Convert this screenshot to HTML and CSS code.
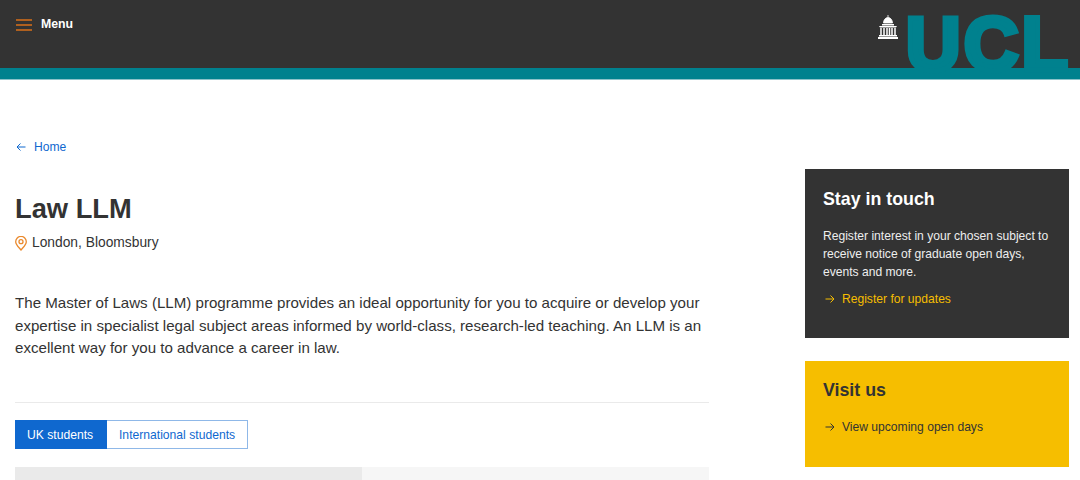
FILE: index.html
```html
<!DOCTYPE html>
<html lang="en">
<head>
    <meta charset="UTF-8">
    <title>Law LLM</title>
    <link rel="stylesheet" href="styles.css">
</head>
<body>
    <!-- Site header -->
    <header class="site-header">
        <a class="menu-link" href="#">
            <svg class="menu-icon" width="16" height="12" viewBox="0 0 16 12">
                <path d="M0 1h16M0 6h16M0 11h16" stroke="#d9701a" stroke-width="1.4" fill="none"/>
            </svg>
            Menu
        </a>
        <div class="logo">
            <svg class="portico" width="20" height="24" viewBox="0 0 20 24">
                <path d="M10 0v2M5.500 8C5.500 5 7.500 2.500 10 2.500S14.500 5 14.500 8z" stroke="#fff" stroke-width="0.8" fill="#fff"/>
                <path d="M4 9h12v1.500H4zM1 11h18l-1 1.500H2zM1 20h18v1.400H1zM0 22h20v2H0z" fill="#fff"/>
                <path d="M3 13v7M6 13v7M9 13v7M11.500 13v7M14 13v7M17 13v7" stroke="#fff" stroke-width="1.500"/>
            </svg>
            <span class="logo-text">UCL</span>
        </div>
    </header>
    <div class="teal-bar"></div>

    <div class="page">
        <main class="content">
            <a class="back-link" href="#">
                <svg width="10" height="10" viewBox="0 0 10 10">
                    <path d="M9.500 5H1M4.500 1.500L1 5l3.500 3.500" stroke="#0f68cf" stroke-width="1" fill="none"/>
                </svg>
                Home
            </a>
            <h1>Law LLM</h1>
            <div class="location">
                <svg width="12" height="15" viewBox="0 0 12 15">
                    <path d="M6 14C3 10.500 .7 8.500 .7 5.700A5.300 5.300 0 0 1 11.300 5.700C11.300 8.500 9 10.500 6 14z" stroke="#ea8a2e" stroke-width="1.300" fill="none"/>
                    <circle cx="6" cy="5.700" r="2" stroke="#ea8a2e" stroke-width="1.300" fill="none"/>
                </svg>
                London, Bloomsbury
            </div>
            <p class="intro">The Master of Laws (LLM) programme provides an ideal opportunity for you to acquire or develop your expertise in specialist legal subject areas informed by world-class, research-led teaching. An LLM is an excellent way for you to advance a career in law.</p>
            <div class="tabs">
                <a class="tab active" href="#">UK students</a>
                <a class="tab" href="#">International students</a>
            </div>
            <div class="fee-table">
                <div class="fee-head"></div>
                <div class="fee-cell"></div>
            </div>
        </main>

        <aside class="sidebar">
            <div class="card card-dark">
                <h2>Stay in touch</h2>
                <p>Register interest in your chosen subject to receive notice of graduate open days, events and more.</p>
                <a class="card-link" href="#">
                    <svg width="10" height="10" viewBox="0 0 10 10">
                        <path d="M.5 5H9M5.500 1.500L9 5 5.500 8.500" stroke="currentColor" stroke-width="1" fill="none"/>
                    </svg>
                    Register for updates
                </a>
            </div>
            <div class="card card-yellow">
                <h2>Visit us</h2>
                <a class="card-link" href="#">
                    <svg width="10" height="10" viewBox="0 0 10 10">
                        <path d="M.5 5H9M5.500 1.500L9 5 5.500 8.500" stroke="currentColor" stroke-width="1" fill="none"/>
                    </svg>
                    View upcoming open days
                </a>
            </div>
        </aside>
    </div>
</body>
</html>
```

FILE: styles.css
```css
/* Reset and base styles */
* {
    box-sizing: border-box;
}

html,
body {
    height: 480px;
    overflow: hidden;
}

body {
    margin: 0;
    font-family: "Liberation Sans", Arial, sans-serif;
    color: #333;
    background: #fff;
}

a {
    text-decoration: none;
}

/* Header */
.site-header {
    display: flex;
    justify-content: space-between;
    height: 68px;
    padding-left: 16px;
    background: #333;
}

.menu-link {
    display: flex;
    align-items: flex-start;
    gap: 9px;
    height: 14px;
    margin-top: 18px;
    font-size: 12.300px;
    line-height: 12px;
    font-weight: bold;
    color: #fff;
}

.menu-icon {
    margin-top: 1px;
}

.logo {
    display: flex;
    align-items: flex-start;
    padding-right: 9px;
}

.portico {
    margin: 15px 8px 0 0;
}

.logo-text {
    height: 64px;
    margin-top: 12px;
    font-size: 76px;
    line-height: 64px;
    font-weight: bold;
    letter-spacing: 3px;
    color: #00818e;
    -webkit-text-stroke: 5px #00818e;
}

.teal-bar {
    height: 12px;
    background: #00818e;
    border-bottom: 1px solid #8cc2c9;
}

/* Page layout */
.page {
    display: flex;
    justify-content: space-between;
    padding: 0 11px 0 15px;
}

.content {
    width: 694px;
    padding-top: 59px;
}

.back-link {
    display: flex;
    align-items: center;
    gap: 8px;
    height: 15px;
    padding-left: 1px;
    font-size: 12.100px;
    color: #0f68cf;
}

h1 {
    margin: 38px 0 0;
    font-size: 27.300px;
    line-height: 34px;
    font-weight: bold;
}

.location {
    display: flex;
    align-items: center;
    gap: 5px;
    margin-top: 8px;
    font-size: 13.800px;
    line-height: 18px;
}

.intro {
    margin: 40px 0 0;
    padding-bottom: 42px;
    font-size: 15.120px;
    line-height: 22.600px;
    border-bottom: 1px solid #eaeaea;
}

/* Fee tabs */
.tabs {
    display: flex;
    margin-top: 17px;
}

.tab {
    height: 29px;
    padding: 0 12px;
    font-size: 12.150px;
    line-height: 28px;
    color: #0f68cf;
    border: 1px solid #8fb8e8;
    border-left: 0;
}

.tab.active {
    width: 92px;
    color: #fff;
    background: #0f68cf;
    border-color: #0f68cf;
}

.fee-table {
    display: flex;
    height: 13px;
    margin-top: 18px;
}

.fee-head {
    width: 347px;
    background: #eaeaea;
}

.fee-cell {
    flex: 1;
    background: #f6f6f6;
}

/* Sidebar cards */
.sidebar {
    display: flex;
    flex-direction: column;
    gap: 23px;
    width: 264px;
    padding-top: 89px;
}

.card {
    padding: 18px;
    font-size: 12.100px;
    line-height: 18px;
}

.card h2 {
    margin: 0;
    font-size: 17.800px;
    line-height: 24px;
}

.card p {
    margin: 16px 0 0;
    color: #eee;
}

.card-dark {
    height: 169px;
    color: #fff;
    background: #333;
}

.card-yellow {
    height: 106px;
    padding-top: 17px;
    color: #333;
    background: #f6be00;
}

.card-link {
    display: flex;
    align-items: center;
    gap: 7px;
    margin-top: 9px;
    padding-left: 2px;
    color: inherit;
}

.card-dark .card-link {
    color: #f6be00;
}

.card-yellow .card-link {
    margin-top: 16px;
}
```
